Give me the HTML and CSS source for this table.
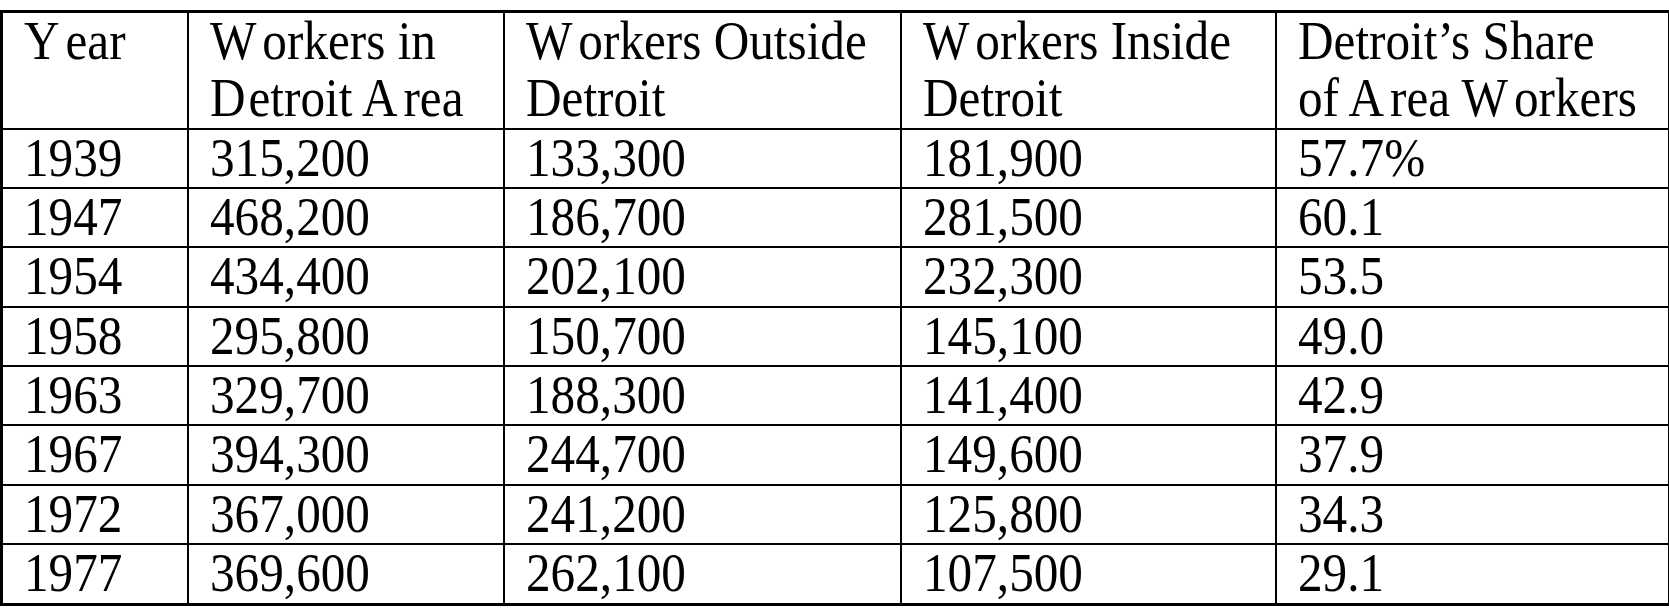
FILE: index.html
```html
<!DOCTYPE html>
<html lang="en">
<head>
<meta charset="utf-8">
<title>Detroit Area Workers</title>
<link rel="stylesheet" href="styles.css">
</head>
<body>
<table class="data">
  <colgroup>
    <col class="c1"><col class="c2"><col class="c3"><col class="c4"><col class="c5">
  </colgroup>
  <thead>
    <tr class="head">
      <th><span class="t"><span class="k">Y</span>ear</span></th>
      <th><span class="t"><span class="k">W</span>orkers in<br>D<span class="k2">etroit</span> <span class="k">A</span>rea</span></th>
      <th><span class="t"><span class="k">W</span>orkers Outside<br>Detroit</span></th>
      <th><span class="t"><span class="k">W</span>orkers Inside<br>Detroit</span></th>
      <th><span class="t">Detroit’s Share<br>of <span class="k">A</span>rea <span class="k">W</span>orkers</span></th>
    </tr>
  </thead>
  <tbody>
    <tr><td><span class="t">1939</span></td><td><span class="t">315,200</span></td><td><span class="t">133,300</span></td><td><span class="t">181,900</span></td><td><span class="t">57.7%</span></td></tr>
    <tr><td><span class="t">1947</span></td><td><span class="t">468,200</span></td><td><span class="t">186,700</span></td><td><span class="t">281,500</span></td><td><span class="t">60.1</span></td></tr>
    <tr><td><span class="t">1954</span></td><td><span class="t">434,400</span></td><td><span class="t">202,100</span></td><td><span class="t">232,300</span></td><td><span class="t">53.5</span></td></tr>
    <tr><td><span class="t">1958</span></td><td><span class="t">295,800</span></td><td><span class="t">150,700</span></td><td><span class="t">145,100</span></td><td><span class="t">49.0</span></td></tr>
    <tr><td><span class="t">1963</span></td><td><span class="t">329,700</span></td><td><span class="t">188,300</span></td><td><span class="t">141,400</span></td><td><span class="t">42.9</span></td></tr>
    <tr><td><span class="t">1967</span></td><td><span class="t">394,300</span></td><td><span class="t">244,700</span></td><td><span class="t">149,600</span></td><td><span class="t">37.9</span></td></tr>
    <tr><td><span class="t">1972</span></td><td><span class="t">367,000</span></td><td><span class="t">241,200</span></td><td><span class="t">125,800</span></td><td><span class="t">34.3</span></td></tr>
    <tr><td><span class="t">1977</span></td><td><span class="t">369,600</span></td><td><span class="t">262,100</span></td><td><span class="t">107,500</span></td><td><span class="t">29.1</span></td></tr>
  </tbody>
</table>
</body>
</html>
```
FILE: styles.css
```css
html, body {
  margin: 0;
  padding: 0;
  background: #ffffff;
}

body {
  padding-top: 10px;
  font-family: "Liberation Serif", "Times New Roman", serif;
  color: #000000;
}

.data {
  border-collapse: collapse;
  table-layout: fixed;
  width: 1668px;
  border: 3px solid #000;
}

.c1 { width: 186px; }
.c2 { width: 316px; }
.c3 { width: 397px; }
.c4 { width: 375px; }
.c5 { width: 394px; }

.data th,
.data td {
  border: 2px solid #000;
  padding: 0 0 0 21px;
  text-align: left;
  vertical-align: top;
  font-weight: normal;
  font-size: 55px;
  line-height: 57px;
  white-space: nowrap;
}

.head th {
  height: 114.5px;
}

tbody td {
  height: 57.4px;
}

.t {
  display: inline-block;
  transform-origin: 0 0;
  transform: translateY(-1px) scaleX(0.895);
}

.k {
  margin-right: 0.12em;
}

.k2 {
  margin-left: 0.06em;
}
```
